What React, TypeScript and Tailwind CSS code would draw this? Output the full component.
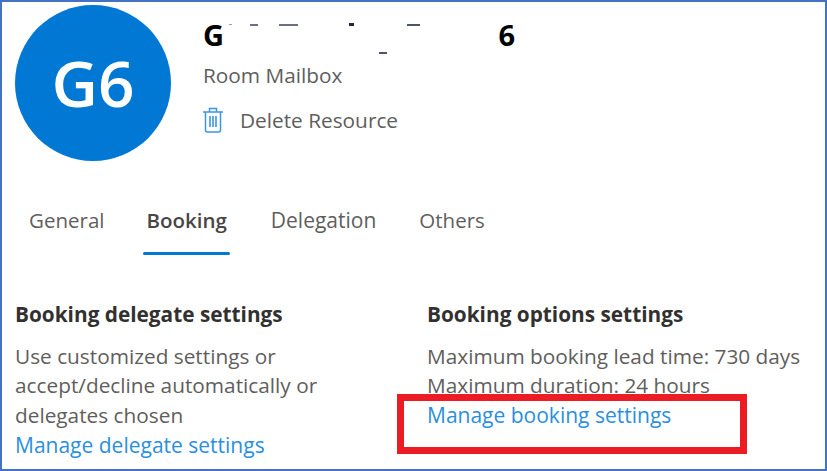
import React from 'react';

const tabs = [
  { label: 'General', className: '' },
  { label: 'Booking', className: 'relative font-semibold text-[#484644] mr-[2px]' },
  { label: 'Delegation', className: 'text-[21px] mr-[1px]' },
  { label: 'Others', className: '' },
];

const TrashIcon = () => (
  <svg width="20" height="26" viewBox="0 0 20 26" fill="none" stroke="#3b96e4" strokeWidth="1.5">
    <path d="M0 5h20" />
    <path d="M6.5 5V1.5h7V5" />
    <path d="M2.5 5v18a2 2 0 0 0 2 2h11a2 2 0 0 0 2-2V5" />
    <path d="M7 9v11M10 9v11M13 9v11" strokeWidth="1.6" />
  </svg>
);

const App: React.FC = () => {
  return (
    <div className="relative w-[827px] h-[471px] overflow-hidden bg-white border-2 border-[#4472c4] font-['Open_Sans',sans-serif]">
      {/* Header */}
      <div className="flex pt-[3px] pl-[13px]">
        <div className="w-[156px] h-[156px] rounded-full bg-[#0078d4] flex items-center justify-center text-white text-[64px] font-semibold">
          G6
        </div>
        <div className="ml-[32px] pt-[13px]">
          <div className="relative flex w-[312px] justify-between text-[29px] leading-[34px] font-bold text-black">
            <span>G</span>
            <span>6</span>
            <i className="absolute left-[26px] top-[6px] w-[3px] h-[1px] bg-gray-400" />
            <i className="absolute left-[47px] top-[6px] w-[8px] h-[2px] bg-gray-500" />
            <i className="absolute left-[76px] top-[6px] w-[19px] h-[2px] bg-gray-500" />
            <i className="absolute left-[146px] top-[5px] w-[5px] h-[3px] bg-gray-800" />
            <i className="absolute left-[204px] top-[6px] w-[13px] h-[2px] bg-gray-600" />
            <i className="absolute left-[176px] top-[34px] w-[8px] h-[2px] bg-gray-600" />
          </div>
          <div className="mt-[9px] text-[20.8px] leading-[28px] text-[#605e5c]">Room Mailbox</div>
          <div className="mt-[17px] flex items-center gap-[17px] text-[20.8px] leading-[28px] text-[#605e5c]">
            <TrashIcon />
            <span>Delete Resource</span>
          </div>
        </div>
      </div>

      {/* Tabs */}
      <div className="mt-[45px] ml-[27px] flex gap-[42px] text-[20.5px] leading-[28px] text-[#605e5c]">
        {tabs.map((tab) => (
          <div key={tab.label} className={tab.className}>
            {tab.label}
            {tab.label === 'Booking' && (
              <div className="absolute -left-[3px] -right-[3px] top-[46px] h-[3px] bg-[#0078d4] rounded-sm" />
            )}
          </div>
        ))}
      </div>

      {/* Settings columns */}
      <div className="mt-[66px] ml-[13px] flex text-[20.8px] leading-[29.7px] text-[#605e5c]">
        <div className="w-[412px]">
          <h3 className="font-bold text-[#323130]">Booking delegate settings</h3>
          <p className="mt-[12px]">
            Use customized settings or
            <br />
            accept/decline automatically or
            <br />
            delegates chosen
          </p>
          <a className="block text-[21px] text-[#2a8fe0]">Manage delegate settings</a>
        </div>
        <div>
          <h3 className="font-bold text-[#323130]">Booking options settings</h3>
          <p className="mt-[12px]">
            Maximum booking lead time: 730 days
            <br />
            Maximum duration: 24 hours
          </p>
          <a className="block text-[21px] text-[#2a8fe0]">Manage booking settings</a>
        </div>
      </div>

      {/* Red annotation box */}
      <div className="absolute left-[395px] top-[392px] w-[350px] h-[60px] border-[7px] border-[#ed1c24]" />
    </div>
  );
};

export default App;
